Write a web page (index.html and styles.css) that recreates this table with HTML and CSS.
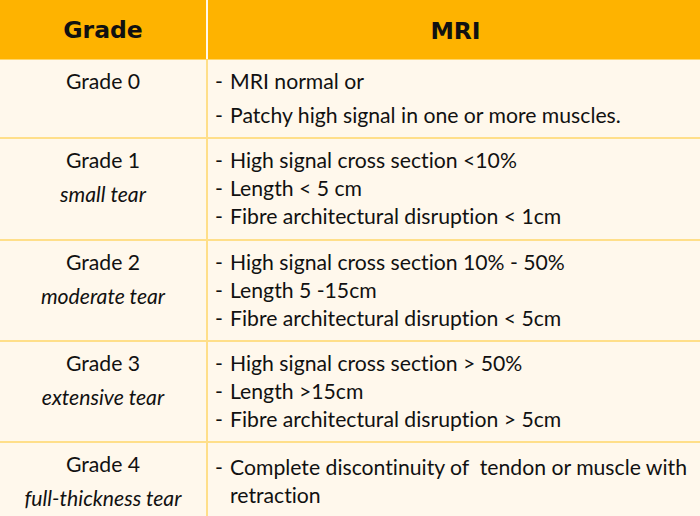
FILE: index.html
```html
<!DOCTYPE html>
<html>
<head>
<meta charset="utf-8">
<link rel="stylesheet" href="styles.css">
</head>
<body>
<div class="table">
  <div class="row head">
    <div class="cell left">Grade</div>
    <div class="cell right">MRI</div>
  </div>
  <div class="row r0">
    <div class="cell left"><div class="g">Grade 0</div></div>
    <div class="cell right loose">
      <div class="item"><span class="d">-</span>MRI normal or</div>
      <div class="item"><span class="d">-</span>Patchy high signal in one or more muscles.</div>
    </div>
  </div>
  <div class="row r1">
    <div class="cell left"><div class="g">Grade 1</div><div class="sub">small tear</div></div>
    <div class="cell right">
      <div class="item"><span class="d">-</span>High signal cross section &lt;10%</div>
      <div class="item"><span class="d">-</span>Length &lt; 5 cm</div>
      <div class="item"><span class="d">-</span>Fibre architectural disruption &lt; 1cm</div>
    </div>
  </div>
  <div class="row r2">
    <div class="cell left"><div class="g">Grade 2</div><div class="sub">moderate tear</div></div>
    <div class="cell right">
      <div class="item"><span class="d">-</span>High signal cross section 10% - 50%</div>
      <div class="item"><span class="d">-</span>Length 5 -15cm</div>
      <div class="item"><span class="d">-</span>Fibre architectural disruption &lt; 5cm</div>
    </div>
  </div>
  <div class="row r3">
    <div class="cell left"><div class="g">Grade 3</div><div class="sub">extensive tear</div></div>
    <div class="cell right">
      <div class="item"><span class="d">-</span>High signal cross section &gt; 50%</div>
      <div class="item"><span class="d">-</span>Length &gt;15cm</div>
      <div class="item"><span class="d">-</span>Fibre architectural disruption &gt; 5cm</div>
    </div>
  </div>
  <div class="row r4">
    <div class="cell left"><div class="g">Grade 4</div><div class="sub">full-thickness tear</div></div>
    <div class="cell right">
      <div class="item hang"><span class="d">-</span>Complete discontinuity of&nbsp; tendon or muscle with retraction</div>
    </div>
  </div>
</div>
</body>
</html>
```
FILE: styles.css
```css
html, body {
  margin: 0;
  padding: 0;
  background: #fff8ec;
}
.table {
  width: 700px;
  height: 516px;
  overflow: hidden;
  background: #fff8ec;
  font-family: "Lato", "Open Sans", sans-serif;
  font-size: 21.2px;
  font-variant-ligatures: none;
  color: #111;
}
.row {
  display: grid;
  grid-template-columns: 206px 2px 1fr;
  border-bottom: 2px solid #ffdf8a;
  box-sizing: border-box;
}
.row::before {
  content: "";
  grid-column: 2;
  grid-row: 1;
  background: #ffdf8a;
}
.row .left { grid-column: 1; grid-row: 1; }
.row .right { grid-column: 3; grid-row: 1; }
.head {
  height: 60px;
  background: #feb300;
  border-bottom: 1px solid #ffd66a;
  font-family: "DejaVu Sans", Verdana, sans-serif;
  font-weight: bold;
  font-size: 23.5px;
}
.head::before { background: #fff8ec; }
.head .cell {
  display: flex;
  align-items: center;
  justify-content: center;
  padding-bottom: 4px;
}
.head .right { padding-right: 4px; }
.r0 { height: 79px; }
.r1 { height: 102px; }
.r2 { height: 101px; }
.r3 { height: 101px; }
.r4 { height: 80px; border-bottom: none; }
.left {
  text-align: center;
  line-height: 34px;
  padding-top: 4px;
}
.sub { font-style: italic; }
.right {
  padding-left: 7px;
  padding-top: 7px;
  line-height: 28px;
}
.right.loose {
  line-height: 34px;
  padding-top: 4px;
}
.r4 .right { padding-top: 10px; }
.d {
  display: inline-block;
  width: 15px;
  text-indent: 0;
}
.hang {
  padding-left: 15px;
  text-indent: -15px;
}
```
